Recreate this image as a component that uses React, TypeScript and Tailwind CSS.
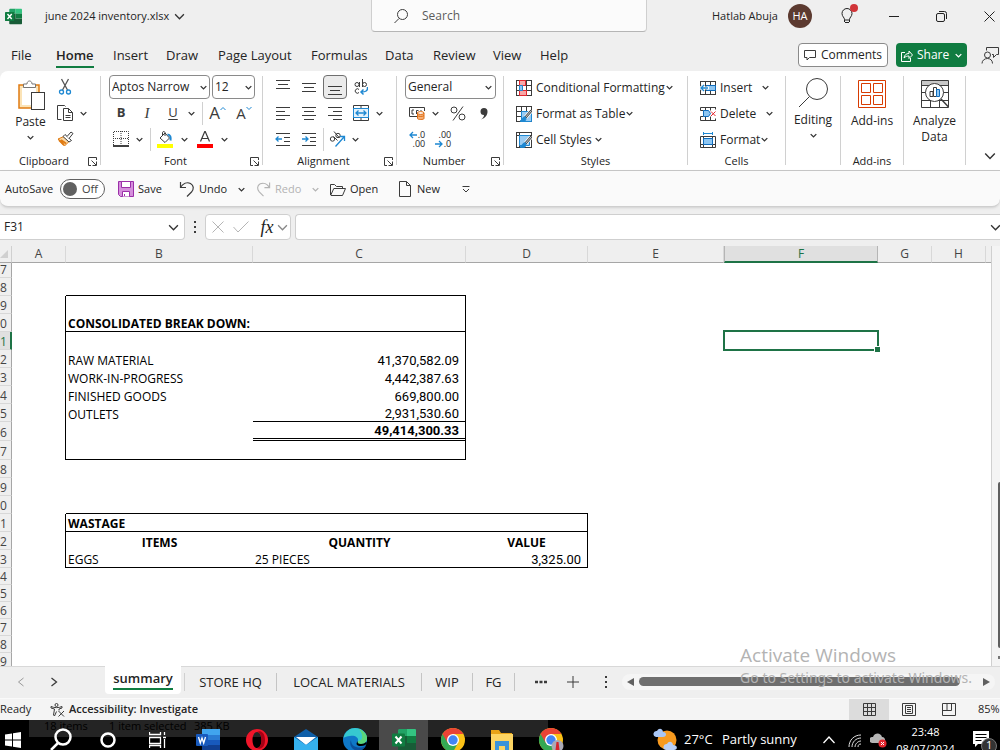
import type { ReactNode } from "react";

const ink = "#3b3b3b";
const blue = "#1e88d2";

type Kids = { children?: ReactNode };

const Svg = ({ w = 16, h = 16, children }: Kids & { w?: number; h?: number }) => (
  <svg width={w} height={h} viewBox={`0 0 ${w} ${h}`} fill="none" stroke={ink} className="shrink-0" aria-hidden="true">
    {children}
  </svg>
);

const Chevron = ({ w = 7, color = "#333" }: { w?: number; color?: string }) => (
  <svg width={w} height={w} viewBox="0 0 10 10" fill="none" stroke={color} strokeWidth={w < 9 ? 1.9 : 1.2} className="shrink-0" aria-hidden="true">
    <path d="M1 3l4 4 4-4" />
  </svg>
);

const IconButton = ({ label, className = "w-[26px]", children }: Kids & { label: string; className?: string }) => (
  <button aria-label={label} className={`flex h-[24px] shrink-0 items-center justify-center ${className}`}>
    {children}
  </button>
);

const Drop = ({ label }: { label: string }) => (
  <IconButton label={label} className="w-[10px]">
    <Chevron />
  </IconButton>
);

const Row = ({ children, className = "" }: Kids & { className?: string }) => (
  <div className={`flex h-[26px] shrink-0 items-center ${className}`}>{children}</div>
);

const Launcher = ({ label }: { label: string }) => (
  <button aria-label={label} className="mr-[3px] flex h-[10px] w-[9px] items-center">
    <Svg w={9} h={9}>
      <path d="M8.5 3V.5H.5v8H3M3.500 3.500L8 8M8.500 4.500v4h-4" />
    </Svg>
  </button>
);

const Group = ({ title, width, launcher, children }: Kids & { title: string; width: string; launcher?: boolean }) => (
  <section className={`my-[5px] flex shrink-0 flex-col border-r border-[#d0d0d0] ${width}`}>
    <div className="-mt-[2px] h-[78px] shrink-0">{children}</div>
    <div className="flex h-[18px] shrink-0 items-center">
      <span className="flex-1 text-center text-[11px]">{title}</span>
      {launcher && <Launcher label={`${title} settings`} />}
    </div>
  </section>
);

const Lines = ({ rows }: { rows: [number, number, number][] }) => (
  <Svg w={16} h={16}>
    {rows.map(([x, y, len]) => (
      <path key={y} d={`M${x} ${y + 0.5}h${len}`} />
    ))}
  </Svg>
);

const Divider = ({ className = "h-[23px]" }: { className?: string }) => <span className={`w-px shrink-0 bg-[#d0d0d0] ${className}`} />;

const ExcelLogo = ({ size }: { size: number }) => (
  <svg width={size} height={size} viewBox="0 0 24 24" className="shrink-0" aria-hidden="true">
    <path fill="#21a366" d="M7 1h8v7H6V2z" />
    <path fill="#33c481" d="M15 1h8a1 1 0 0 1 1 1v6h-9z" />
    <path fill="#107c41" d="M15 8h9v7h-9z" />
    <path fill="#185c37" d="M6 8h9v7h9v7a1 1 0 0 1-1 1H7a1 1 0 0 1-1-1z" />
    <rect y="5.500" width="13" height="13" rx="1" fill="#107c41" />
    <path stroke="#fff" strokeWidth="2" d="M3.500 8.500l6 7M9.500 8.500l-6 7" />
  </svg>
);

const GridBase = () => (
  <>
    <rect x=".5" y=".5" width="15" height="15" fill="#fff" />
    <path d="M.5 5.500h15M.5 10.500h15M5.500.5v15M10.500.5v15" />
  </>
);

const Brush = () => (
  <>
    <path d="M15 5L9 12" stroke="#fff" strokeWidth="4" />
    <path d="M15.500 4.500L9 12" strokeWidth="2.500" />
    <path d="M15.500 4.500L9 12" stroke="#cfd8dc" />
    <path d="M9.500 11c-3-1-3 3-5.500 4 3 1.500 6 .5 6-2.500z" fill={blue} stroke={blue} />
  </>
);

function TitleBar() {
  return (
    <header className="grid h-[36px] shrink-0 grid-cols-[371fr_276fr_353fr] items-start">
      <div className="flex h-[32px] items-center pl-[5px]">
        <ExcelLogo size={17} />
        <button className="ml-[23px] flex items-center gap-[5px] text-[11px]">
          june 2024 inventory.xlsx
          <Chevron w={11} />
        </button>
      </div>
      <label className="flex h-[32px] items-center rounded-b border border-t-0 border-[#cfcfcf] border-b-[#b5b5b5] bg-[#fbfbfb] pl-[21px]">
        <Svg w={16} h={16}>
          <circle cx="9.500" cy="6.500" r="5" />
          <path d="M6 10.500L1.500 15" />
        </Svg>
        <input aria-label="Search" placeholder="Search" className="ml-[13px] w-full min-w-0 bg-transparent text-[12px] outline-none placeholder:text-[#5b5b5b]" />
      </label>
      <div className="flex h-[32px] items-center pl-[65px]">
        <span className="w-[76px] shrink-0 text-[11px] whitespace-nowrap">Hatlab Abuja</span>
        <button className="flex size-[24px] shrink-0 items-center justify-center rounded-full bg-[#5c3a30] text-[11px] text-white">HA</button>
        <IconButton label="Tips" className="ml-[26px] w-[20px]">
          <Svg w={20} h={24}>
            <path d="M6.500 18v-2.500c0-2-2.500-3-2.500-6a5 5 0 0 1 10 0c0 3-2.500 4-2.500 6V18M6.500 16h5M7 18.500h4" stroke="#222" />
            <circle cx="16" cy="4" r="4" fill="#d13438" stroke="none" />
          </Svg>
        </IconButton>
        <IconButton label="Minimize" className="ml-[27px] w-[18px]">
          <Svg w={10} h={10}><path d="M0 5.500h10" stroke="#222" /></Svg>
        </IconButton>
        <IconButton label="Restore" className="ml-[29px] w-[18px]">
          <Svg w={11} h={11}>
            <rect x=".5" y="2.500" width="8" height="8" rx="1.500" stroke="#222" />
            <path d="M3 .5h5.500a2 2 0 0 1 2 2V8" stroke="#222" />
          </Svg>
        </IconButton>
        <IconButton label="Close" className="ml-[30px] w-[18px]">
          <Svg w={11} h={11}><path d="M.5.5l10 10M10.500.5l-10 10" stroke="#222" /></Svg>
        </IconButton>
      </div>
    </header>
  );
}

const menu = [
  ["File", "w-[45px]"],
  ["Home", "w-[57px]"],
  ["Insert", "w-[53px]"],
  ["Draw", "w-[52px]"],
  ["Page Layout", "w-[93px]"],
  ["Formulas", "w-[74px]"],
  ["Data", "w-[48px]"],
  ["Review", "w-[60px]"],
  ["View", "w-[47px]"],
  ["Help", "w-[40px]"],
];

function MenuBar() {
  return (
    <nav className="flex h-[35px] shrink-0 items-center pt-[3px] pl-[11px] text-[13px]">
      {menu.map(([name, width]) => (
        <button key={name} className={`shrink-0 pt-[4px] text-left whitespace-nowrap ${width}`}>
          <span className={name === "Home" ? "inline-block border-b-2 border-[#107c41] font-semibold" : "inline-block border-b-2 border-transparent"}>{name}</span>
        </button>
      ))}
      <button className="ml-auto flex h-[24px] w-[90px] shrink-0 items-center gap-[5px] rounded border border-[#8a8a8a] bg-white px-[5px] text-[12px]">
        <Svg w={12} h={12}><path d="M.5 1.500h11v7h-6L3 11V8.500H.5z" /></Svg>
        Comments
      </button>
      <button className="ml-[8px] flex h-[24px] w-[71px] shrink-0 items-center gap-[4px] rounded bg-[#107c41] px-[5px] text-[12px] text-white">
        <Svg w={12} h={13}>
          <path stroke="#fff" d="M4 3.500H.5v9h9V9M3 9c.5-3 2-4.500 5-4.500V2l3.500 4L8 9.500V7C6 7 4.500 7.500 3 9z" />
        </Svg>
        Share
        <span className="ml-auto"><Chevron color="#fff" /></span>
      </button>
      <IconButton label="Catch up" className="ml-[13px] w-[20px]">
        <Svg w={18} h={17}>
          <circle cx="6.500" cy="8" r="3" />
          <path d="M1 16.500c0-3 2.500-5 5.500-5s5 2 5 5M5.500 3.500v-3h12v7h-2l-3 3v-3H11" />
        </Svg>
      </IconButton>
    </nav>
  );
}

function ClipboardGroup() {
  return (
    <Group title="Clipboard" width="w-[101px]" launcher>
      <div className="flex">
        <button className="ml-[10px] flex w-[41px] flex-col items-center pt-[6px] text-[12px]">
          <Svg w={28} h={31}>
            <rect x="2" y="5" width="20" height="23" fill="#fbe3b6" stroke="#e07b12" strokeWidth="1.500" />
            <path d="M5 8h14v17H5z" fill="#fff" stroke="none" />
            <path d="M6.500 7.500V4H10c0-4 5-4 5 0h3.500v3.500z" fill="#fff" stroke="#777" />
            <rect x="14.500" y="12.500" width="13" height="17" fill="#fff" />
          </Svg>
          <span className="mt-[2px] leading-[18px]">Paste</span>
          <span className="mt-[3px]"><Chevron /></span>
        </button>
        <div className="pl-[1px]">
          <Row>
            <IconButton label="Cut">
              <Svg w={16} h={18}>
                <path d="M4.500 1l6 11M11.500 1l-6 11" stroke="#555" strokeWidth="1.300" />
                <circle cx="4.500" cy="14" r="2" stroke={blue} strokeWidth="1.300" />
                <circle cx="11.500" cy="14" r="2" stroke={blue} strokeWidth="1.300" />
              </Svg>
            </IconButton>
          </Row>
          <Row>
            <IconButton label="Copy">
              <Svg w={17} h={17}>
                <path d="M4.500 14.500h-4V.5h7l1 1M6.500 3.500h5l4 4v8h-9zM11.500 3.500v4h4M8.500 10.500h5M8.500 12.500h5" />
              </Svg>
            </IconButton>
            <Drop label="Copy options" />
          </Row>
          <Row>
            <IconButton label="Format Painter">
              <Svg w={17} h={16}>
                <path d="M1 8l6-2.500 5 5L7.500 15z" fill="#fbd9a8" stroke="#e07b12" />
                <path d="M2 9l5 5M4 9l5 3.500" stroke="#e07b12" strokeWidth="1.800" />
                <path d="M6 5.500l2-2 6.500 6-2.500 1.500z" fill="#fff" />
                <path d="M10 5.500l4-4.500 2 1.500-4 5" fill="#fff" />
              </Svg>
            </IconButton>
          </Row>
        </div>
      </div>
    </Group>
  );
}

function FontGroup() {
  return (
    <Group title="Font" width="w-[162px]" launcher>
      <Row className="gap-[2px] pl-[8px]">
        <div className="flex h-[24px] w-[101px] items-center rounded border border-[#8a8a8a] bg-white pr-[2px]">
          <select aria-label="Font name" className="w-full min-w-0 appearance-none bg-transparent pl-[2px] text-[12px]">
            <option>Aptos Narrow</option>
          </select>
          <Chevron />
        </div>
        <div className="flex h-[24px] w-[43px] items-center rounded border border-[#8a8a8a] bg-white pr-[2px]">
          <select aria-label="Font size" className="w-full min-w-0 appearance-none bg-transparent pl-[2px] text-[12px]">
            <option>12</option>
          </select>
          <Chevron />
        </div>
      </Row>
      <Row className="pl-[7px] text-[13px] text-[#3b3b3b]">
        <IconButton label="Bold"><b>B</b></IconButton>
        <IconButton label="Italic"><i className="font-['Liberation_Serif',serif] text-[15px]">I</i></IconButton>
        <IconButton label="Underline"><span className="underline underline-offset-2">U</span></IconButton>
        <Drop label="Underline options" />
        <Divider className="ml-[6px] h-[23px]" />
        <IconButton label="Increase Font Size" className="ml-[1px] w-[27px]">
          <span className="text-[17px]">A</span>
          <span className="mb-[10px]"><svg width="6" height="5" viewBox="0 0 6 5" fill="none" stroke={blue}><path d="M.5 4L3 1.500 5.500 4" /></svg></span>
        </IconButton>
        <IconButton label="Decrease Font Size">
          <span className="text-[15px]">A</span>
          <span className="mb-[10px]"><svg width="6" height="5" viewBox="0 0 6 5" fill="none" stroke={blue}><path d="M.5 1L3 3.500 5.500 1" /></svg></span>
        </IconButton>
      </Row>
      <Row className="pl-[7px]">
        <IconButton label="Borders">
          <Svg w={16} h={16}>
            <path d="M.5 14V.5h15V14M8 0v14M0 7.500h16" strokeDasharray="1 1" />
            <path d="M0 15h16" stroke="#000" strokeWidth="1.500" />
          </Svg>
        </IconButton>
        <Drop label="Borders options" />
        <Divider className="ml-[6px] h-[23px]" />
        <IconButton label="Fill Color" className="w-[28px]">
          <Svg w={16} h={17}>
            <path d="M3 7l5-5 4.500 5L8 11.500zM8 5V1.500a1.300 1.300 0 0 0-2.500 0V5" />
            <path d="M10.500 3.500c3 0 3.500 3 3 6" stroke={blue} strokeWidth="2" />
            <path d="M0 13h16v4H0z" fill="#ff0" stroke="none" />
          </Svg>
        </IconButton>
        <Drop label="Fill Color options" />
        <IconButton label="Font Color" className="ml-[2px] w-[28px]">
          <Svg w={16} h={17}>
            <path d="M3.500 10.500L8 0l4.500 10.500M5 7.500h6" strokeWidth="1.200" />
            <path d="M0 13h16v4H0z" fill="#f00" stroke="none" />
          </Svg>
        </IconButton>
        <Drop label="Font Color options" />
      </Row>
    </Group>
  );
}

function AlignmentGroup() {
  return (
    <Group title="Alignment" width="w-[134px]" launcher>
      <Row className="pl-[7px]">
        <IconButton label="Top Align"><Lines rows={[[1, 1, 14], [3, 5, 10], [1, 9, 14]]} /></IconButton>
        <IconButton label="Middle Align"><Lines rows={[[1, 4, 14], [3, 8, 10], [1, 12, 14]]} /></IconButton>
        <IconButton label="Bottom Align" className="mx-[1px] w-[24px] rounded border border-[#6f6f6f] bg-[#ebebeb]">
          <Lines rows={[[1, 7, 14], [3, 11, 10], [1, 15, 14]]} />
        </IconButton>
        <IconButton label="Wrap Text">
          <Svg w={14} h={17}>
            <circle cx="3" cy="5.500" r="2" />
            <path d="M5.500 3v5M8.500 0v8M5 13.500a2.200 2.200 0 1 1 0-3" />
            <circle cx="10.500" cy="5.500" r="2" />
            <path d="M13.500 8c.5 4-2 5-6 5M9.500 10.500L7 13l2.500 2.500" stroke={blue} strokeWidth="1.500" />
          </Svg>
        </IconButton>
      </Row>
      <Row className="pl-[7px]">
        <IconButton label="Align Left"><Lines rows={[[1, 2, 14], [1, 6, 9], [1, 10, 14], [1, 14, 9]]} /></IconButton>
        <IconButton label="Center"><Lines rows={[[1, 2, 14], [3, 6, 10], [1, 10, 14], [3, 14, 10]]} /></IconButton>
        <IconButton label="Align Right"><Lines rows={[[1, 2, 14], [6, 6, 9], [1, 10, 14], [6, 14, 9]]} /></IconButton>
        <IconButton label="Merge and Center">
          <Svg>
            <path d="M.5.5h15v15H.5zM8 0v4M8 12v4" />
            <rect x=".5" y="3.500" width="15" height="9" fill="#e3f1fb" stroke={blue} />
            <path d="M3 8h10M5.500 5.500L3 8l2.500 2.500M10.500 5.500L13 8l-2.500 2.500" stroke={blue} strokeWidth="1.300" />
          </Svg>
        </IconButton>
        <Drop label="Merge options" />
      </Row>
      <Row className="pl-[7px]">
        <IconButton label="Decrease Indent">
          <Svg><path d="M1 2.500h14M9 6.500h6M9 10.500h6M1 14.500h14" /><path d="M7 8H1M3.500 5.500L1 8l2.500 2.500" stroke={blue} strokeWidth="1.300" /></Svg>
        </IconButton>
        <IconButton label="Increase Indent">
          <Svg><path d="M1 2.500h14M9 6.500h6M9 10.500h6M1 14.500h14" /><path d="M1 8h6M4.500 5.500L7 8l-2.500 2.500" stroke={blue} strokeWidth="1.300" /></Svg>
        </IconButton>
        <Divider className="ml-[1px] h-[23px]" />
        <IconButton label="Orientation" className="w-[26px]">
          <Svg w={17} h={17}>
            <circle cx="3.500" cy="8" r="2.200" />
            <circle cx="9" cy="4.500" r="2.200" />
            <path d="M4.500 5.500l4 4M5 .5L10.500 7" />
            <path d="M6.500 15.500L15 6M11 5.500h4.500V10" stroke={blue} strokeWidth="1.300" />
          </Svg>
        </IconButton>
        <Drop label="Orientation options" />
      </Row>
    </Group>
  );
}

const Arrow = ({ d }: { d: string }) => (
  <svg width="9" height="8" viewBox="0 0 9 8" fill="none" stroke={blue} strokeWidth="1.300" aria-hidden="true">
    <path d={d} />
  </svg>
);

const Decimals = ({ grow }: { grow: boolean }) => (
  <span className="flex flex-col text-[9px] leading-[10px]">
    <span className="flex h-[9px] items-center justify-end">
      {grow && <Arrow d="M8 4H1M4 1L1 4l3 3" />}
      {grow ? ".0" : ".00"}
    </span>
    <span className="flex h-[9px] items-center justify-end">
      {!grow && <Arrow d="M0 4h7M4 1l3 3-3 3" />}
      {grow ? ".00" : ".0"}
    </span>
  </span>
);

function NumberGroup() {
  return (
    <Group title="Number" width="w-[107px]" launcher>
      <Row className="pl-[8px]">
        <div className="flex h-[24px] w-[91px] items-center rounded border border-[#8a8a8a] bg-white pr-[3px]">
          <select aria-label="Number format" className="w-full min-w-0 appearance-none bg-transparent pl-[2px] text-[12px]">
            <option>General</option>
          </select>
          <Chevron />
        </div>
      </Row>
      <Row className="pl-[7px]">
        <IconButton label="Accounting Number Format">
          <Svg w={16} h={14}>
            <path d="M8 10.500H.5v-9h15V5M5 4H3v4h2M7.500 8V4.500h2M12 4v1" />
            <path d="M8.500 7v5.500c0 1.300 6.500 1.300 6.500 0V7z" fill="#f5b27a" stroke="#e06c12" />
            <ellipse cx="11.700" cy="7" rx="3.300" ry="1.400" fill="#fff" stroke="#e06c12" />
            <path d="M8.500 9.500c1 1.300 5.500 1.300 6.500 0" stroke="#e06c12" />
          </Svg>
        </IconButton>
        <Drop label="Accounting options" />
        <IconButton label="Percent Style" className="ml-[5px] w-[26px]">
          <Svg w={16} h={15}><circle cx="4" cy="4" r="3" /><circle cx="12" cy="11" r="3" /><path d="M13 .5L3 14.500" /></Svg>
        </IconButton>
        <IconButton label="Comma Style">
          <Svg w={8} h={13}><path d="M1 12.500c5-1.500 6.500-5 6.500-8A3.500 3.500 0 1 0 4 8c0 1.500-1 3-3 4.500z" fill={ink} stroke="none" /></Svg>
        </IconButton>
      </Row>
      <Row className="pl-[7px]">
        <IconButton label="Increase Decimal"><Decimals grow /></IconButton>
        <IconButton label="Decrease Decimal"><Decimals grow={false} /></IconButton>
      </Row>
    </Group>
  );
}

const TextTool = ({ icon, label, gap = "gap-[3px]" }: { icon: ReactNode; label: string; gap?: string }) => (
  <Row className="pt-[1px] pl-[12px]">
    <button className="flex items-center text-[12px] whitespace-nowrap">
      <span className="mr-[4px]">{icon}</span>
      <span className={`flex items-center ${gap}`}>
        {label}
        <Chevron />
      </span>
    </button>
  </Row>
);

function StylesGroup() {
  return (
    <Group title="Styles" width="w-[184px]">
      <TextTool
        gap="gap-[1px]"
        label="Conditional Formatting"
        icon={
          <Svg>
            <GridBase />
            <path d="M3.500.5h6v5h-6zM5.500 10.500h5v5h-7v-5z" fill="#f7a8a8" stroke="#e3262e" />
            <path d="M3.500 5.500h3v5h-3z" fill="#8ec6f2" stroke={blue} />
          </Svg>
        }
      />
      <TextTool gap="gap-[1px]" label="Format as Table" icon={<Svg><GridBase /><path d="M5.500 5.500h10v10h-10z" fill="#9accf3" stroke={blue} /><Brush /></Svg>} />
      <TextTool
        label="Cell Styles"
        icon={
          <Svg>
            <rect x=".5" y=".5" width="15" height="15" fill="#fff" />
            <path d="M.5 3.500h15M3.500.5v15" />
            <path d="M3.500 3.500h10v10h-10z" fill="#9accf3" stroke={blue} />
            <Brush />
          </Svg>
        }
      />
    </Group>
  );
}

function CellsGroup() {
  return (
    <Group title="Cells" width="w-[98px]">
      <TextTool
        gap="gap-[10px]"
        label="Insert"
        icon={
          <Svg>
            <rect x=".5" y="1.500" width="15" height="13" fill="#fff" />
            <path d="M.5 5.500h15M.5 10.500h15M5.500 1.500v13M10.500 1.500v13" />
            <path d="M6.500 5.500h9v5h-9z" fill="#8ec6f2" stroke="#0f6cbd" />
            <path d="M9 8H1M4 4.500L.8 8 4 11.500" stroke="#fff" strokeWidth="3" />
            <path d="M8 8H1M4 5L1 8l3 3" stroke={blue} strokeWidth="1.300" />
          </Svg>
        }
      />
      <TextTool
        gap="gap-[10px]"
        label="Delete"
        icon={
          <Svg>
            <path d="M16 1.500H.5v3h3M5.500 1.500v3M10.500 1.500v3M15.500 1.500v2M16 14.500H.5v-4h3M5.500 14.500v-4M10.500 14.500v-4M15.500 14.500v-2" />
            <path d="M3.500 4.500h5l2 3-2 3h-5z" fill="#8ec6f2" stroke="#0f6cbd" />
            <path d="M11 5.500l4.500 4.500M15.500 5.500L11 10" stroke="#e3262e" />
          </Svg>
        }
      />
      <TextTool
        gap="gap-[1px]"
        label="Format"
        icon={
          <Svg>
            <path d="M.5 4.500h15v11H.5zM.5 12.500h15M3.500 4v12M12.500 4v12" />
            <path d="M3.500 6.500h9v6h-9z" fill="#8ec6f2" stroke="#0f6cbd" />
            <path d="M3.500 0v3M12.500 0v3M3.500 1.500h9" stroke={blue} />
          </Svg>
        }
      />
    </Group>
  );
}

function Ribbon() {
  return (
    <div className="flex h-[100px] shrink-0 rounded-tl-lg border-b border-[#c8c8c8] bg-white">
      <ClipboardGroup />
      <FontGroup />
      <AlignmentGroup />
      <NumberGroup />
      <StylesGroup />
      <CellsGroup />
      <Group title="" width="w-[55px]">
        <button className="flex w-full flex-col items-center pt-[4px] text-[12px]">
          <Svg w={30} h={30}>
            <circle cx="19" cy="11" r="10.500" />
            <path d="M11.500 18.500L1 29" />
          </Svg>
          <span className="mt-[3px] leading-[18px]">Editing</span>
          <span className="mt-[3px]"><Chevron /></span>
        </button>
      </Group>
      <Group title="Add-ins" width="w-[63px]">
        <button className="flex w-full flex-col items-center pt-[6px] text-[12px]">
          <svg width="28" height="28" viewBox="0 0 28 28" fill="none" stroke="#d83b01" aria-hidden="true">
            <path d="M.5.5h27v27H.5zM3.500 3.500h9v9h-9zM15.500 3.500h9v9h-9zM3.500 15.500h9v9h-9zM15.500 15.500h9v9h-9z" />
          </svg>
          <span className="mt-[4px] leading-[18px]">Add-ins</span>
        </button>
      </Group>
      <Group title="" width="w-[62px]">
        <button className="flex w-full flex-col items-center pt-[6px] text-[12px]">
          <Svg w={28} h={28}>
            <path d="M.5.5h27v27H.5z" />
            <path d="M1 1h26v4H1z" fill="#c8c8c8" stroke="none" />
            <path d="M.5 5.500h27M.5 12.500h27M.5 20.500h27M9.500 20v8M18.500 20v8" />
            <circle cx="13.500" cy="12.500" r="9" fill="#fff" />
            <path d="M20 19l7.500 8" strokeWidth="1.500" />
            <path d="M9 11.500h3v5H9z" />
            <path d="M12.500 7.500h3v9h-3z" fill="#fff" />
            <path d="M15.500 9.500h3v7h-3z" fill="#8ec6f2" stroke="#0f6cbd" />
          </Svg>
          <span className="mt-[5px] leading-[16px]">Analyze Data</span>
        </button>
      </Group>
      <div className="flex flex-1 items-end justify-end pr-[4px] pb-[2px]">
        <IconButton label="Collapse Ribbon" className="w-[12px]">
          <Chevron w={12} />
        </IconButton>
      </div>
    </div>
  );
}

function QuickAccess() {
  return (
    <div className="flex h-[36px] shrink-0 items-center rounded-b-lg border-b border-[#cfcfcf] bg-[#fafafa] pt-[1px] pl-[5px] text-[11px] shadow-sm">
      <label htmlFor="autosave" className="w-[55px] shrink-0 whitespace-nowrap">AutoSave</label>
      <button id="autosave" role="switch" aria-checked="false" className="flex h-[20px] w-[45px] shrink-0 items-center gap-[5px] rounded-full border border-[#616161] bg-white pl-[2px] text-[#444]">
        <span className="size-[14px] rounded-full bg-[#616161]" />
        Off
      </button>
      <button className="ml-[13px] flex w-[61px] shrink-0 items-center gap-[4px]">
        <Svg>
          <path d="M.5.5h15v15H2.500l-2-2z" fill="#d58fdc" stroke="#9b2fa8" />
          <path d="M3.500.5h9v6h-9zM4.500 15.500v-5h7v5" fill="#fff" stroke="#9b2fa8" />
          <path d="M6.500 13v2" stroke="#9b2fa8" />
        </Svg>
        Save
      </button>
      <button className="flex w-[57px] shrink-0 items-center gap-[4px]">
        <Svg><path d="M1.500 1v5.500H7M1.500 6.500C4 2.500 8 .8 11.500 2.500c3.500 2 3.500 5.500 1 8.500L8 15.500" strokeWidth="1.200" /></Svg>
        Undo
      </button>
      <Drop label="Undo history" />
      <button disabled className="ml-[10px] flex w-[54px] shrink-0 items-center gap-[4px] text-[#b3b3b3]">
        <svg width="15" height="16" viewBox="0 0 16 16" fill="none" stroke="#b3b3b3" strokeWidth="1.200" aria-hidden="true">
          <path d="M14.500 1v5.500H9M14.500 6.500C12 2.500 8 .8 4.500 2.500 1 4.500 1 8 3.500 11L8 15.500" />
        </svg>
        Redo
      </button>
      <IconButton label="Redo history" className="w-[10px]"><Chevron color="#b3b3b3" /></IconButton>
      <button className="ml-[10px] flex w-[69px] shrink-0 items-center gap-[4px]">
        <Svg w={16} h={13}><path d="M.5 12V1.500h4l2 2h6v2M.8 12l3-6.500h11.700l-3 7H.8" /></Svg>
        Open
      </button>
      <button className="flex w-[60px] shrink-0 items-center gap-[6px]">
        <Svg w={12} h={16}><path d="M.5.5h7l4 4v11H.5zM7.500.5v4h4" /></Svg>
        New
      </button>
      <IconButton label="Customize Quick Access Toolbar" className="w-[14px]">
        <Svg w={8} h={8}><path d="M.5 1.500h7M1 4l3 3 3-3" /></Svg>
      </IconButton>
    </div>
  );
}

function FormulaBar() {
  return (
    <div className="mt-[7px] flex h-[26px] shrink-0">
      <div className="flex w-[185px] shrink-0 items-center rounded-r border border-l-0 border-[#cfcfcf] bg-white pr-[5px]">
        <input aria-label="Name Box" defaultValue="F31" className="w-full min-w-0 pl-[4px] text-[12px] outline-none" />
        <Chevron w={11} />
      </div>
      <div className="flex w-[20px] shrink-0 items-center justify-center">
        <Svg w={2} h={12}><path d="M1 0v2M1 5v2M1 10v2" strokeWidth="2" /></Svg>
      </div>
      <div className="flex w-[86px] shrink-0 items-center rounded border border-[#cfcfcf] bg-white pl-[5px]">
        <IconButton label="Cancel" className="w-[13px]">
          <Svg w={12} h={12}><path d="M.5.5l11 11M11.500.5l-11 11" stroke="#b5b5b5" /></Svg>
        </IconButton>
        <IconButton label="Enter" className="ml-[9px] w-[16px]">
          <Svg w={16} h={12}><path d="M.5 6l4.500 5L15.500.5" stroke="#b5b5b5" /></Svg>
        </IconButton>
        <IconButton label="Insert Function" className="mr-[1px] ml-[9px] w-[18px]">
          <i className="font-['Liberation_Serif',serif] text-[18px] leading-none text-[#222]">fx</i>
        </IconButton>
        <Chevron w={11} color="#888" />
      </div>
      <div className="ml-[4px] flex min-w-0 flex-1 items-center rounded-l border border-r-0 border-[#cfcfcf] bg-white">
        <input aria-label="Formula Bar" className="w-full min-w-0 px-[4px] text-[12px] outline-none" />
        <IconButton label="Expand Formula Bar" className="w-[10px]"><Chevron w={11} /></IconButton>
      </div>
    </div>
  );
}

const columns = ["A", "B", "C", "D", "E", "F", "G", "H"];

// text, then borders and alignment for each filled cell
const cells: Record<string, [string, string]> = {
  B28: ["", "border-b border-b-black"],
  C28: ["", "border-b border-b-black"],
  B30: ["CONSOLIDATED BREAK DOWN:", "border-b border-b-black font-bold"],
  C30: ["", "border-b border-b-black"],
  B32: ["RAW MATERIAL", ""],
  C32: ["41,370,582.09", "text-right"],
  B33: ["WORK-IN-PROGRESS", ""],
  C33: ["4,442,387.63", "text-right"],
  B34: ["FINISHED GOODS", ""],
  C34: ["669,800.00", "text-right"],
  B35: ["OUTLETS", ""],
  C35: ["2,931,530.60", "border-b border-b-black text-right"],
  C36: ["49,414,300.33", "border-b-3 border-double border-b-black text-right font-bold"],
  B37: ["", "border-b border-b-black"],
  C37: ["", "border-b border-b-black"],
  B40: ["", "border-b border-b-black"],
  C40: ["", "border-b border-b-black"],
  D40: ["", "border-b border-b-black"],
  B41: ["WASTAGE", "border-b border-b-black font-bold"],
  C41: ["", "border-b border-b-black"],
  D41: ["", "border-b border-b-black"],
  B42: ["ITEMS", "text-center font-bold"],
  C42: ["QUANTITY", "text-center font-bold"],
  D42: ["VALUE", "text-center font-bold"],
  B43: ["EGGS", "border-b border-b-black"],
  C43: ["25 PIECES", "border-b border-b-black"],
  D43: ["3,325.00", "border-b border-b-black text-right"],
};

const rowNumbers = Array.from({ length: 23 }, (_, i) => i + 27);

function rowHeight(n: number) {
  if (n === 27) return "h-[15px]";
  if (n === 36 || n === 37) return "h-[19px]";
  return n > 43 ? "h-[17px]" : "h-[18px]";
}

function sideBorder(col: string, n: number) {
  const inTotals = n >= 29 && n <= 37;
  const inWastage = n >= 41 && n <= 43;
  if (col === "A" && (inTotals || inWastage)) return "border-r border-r-black";
  if (col === "C" && inTotals) return "border-r border-r-black";
  if (col === "D" && inWastage) return "border-r border-r-black";
  return "";
}

// figures get wider digits than the labels
function cellFace(style: string) {
  if (style.includes("text-right")) return "pr-[6px] font-['Roboto',sans-serif] text-[13px] leading-[15px]";
  const face = "font-['Open_Sans',sans-serif] text-[12px] leading-[14px]";
  return style.includes("text-center") ? face : `pl-[2px] ${face}`;
}

function Sheet() {
  return (
    <main className="mt-[6px] flex min-h-0 flex-1 overflow-hidden">
      <div className="min-w-0 flex-1 overflow-hidden border-r border-[#d0d0d0] bg-white">
        <table className="w-full table-fixed border-separate border-spacing-0 text-black">
          <colgroup>
            <col className="w-[12px]" />
            <col className="w-[54px]" />
            <col className="w-[187px]" />
            <col className="w-[213px]" />
            <col className="w-[122px]" />
            <col className="w-[136px]" />
            <col className="w-[154px]" />
            <col className="w-[54px]" />
            <col className="w-[54px]" />
            <col />
          </colgroup>
          <thead>
            <tr className="h-[17px] bg-[#efefef] font-['Open_Sans',sans-serif] text-[12px] leading-[14px] text-[#444]">
              <th aria-label="Select all" className="border-r border-b border-[#d0d0d0] border-b-[#a6a6a6] p-0">
                <svg width="8" height="8" viewBox="0 0 8 8" fill="#d0d0d0" aria-hidden="true"><path d="M8 0v8H0z" /></svg>
              </th>
              {columns.map((c) => (
                <th
                  key={c}
                  scope="col"
                  className={
                    c === "F"
                      ? "border-r border-b-2 border-l border-x-[#b5b5b5] border-b-[#1e7346] bg-[#e0e0e0] p-0 font-normal text-[#1e7346]"
                      : "border-r border-b border-r-[#d8d8d8] border-b-[#a6a6a6] p-0 font-normal"
                  }
                >
                  {c}
                </th>
              ))}
              <th className="border-b border-[#a6a6a6] p-0" />
            </tr>
          </thead>
          <tbody>
            {rowNumbers.map((n) => (
              <tr key={n} className={rowHeight(n)}>
                <th
                  scope="row"
                  className={`overflow-hidden border-b border-[#d8d8d8] p-0 text-left align-bottom font-['Open_Sans',sans-serif] text-[12px] leading-[14px] font-normal ${n === 31 ? "border-r-2 border-r-[#1e7346] bg-[#e0e0e0] text-[#1e7346]" : "border-r border-r-[#a6a6a6] bg-[#efefef] text-[#444]"}`}
                >
                  {n % 10}
                </th>
                {columns.map((c) => {
                  const [text, style] = cells[c + n] ?? ["", ""];
                  const active = c === "F" && n === 31;
                  return (
                    <td key={c} className={`py-0 align-bottom whitespace-nowrap ${cellFace(style)} ${style} ${sideBorder(c, n)} ${active ? "relative" : ""}`}>
                      {text}
                      {active && (
                        <span className="absolute -inset-x-[1px] -top-[2px] -bottom-[1px] border-2 border-[#1e7346]">
                          <span className="absolute -right-[3px] -bottom-[3px] size-[6px] border-t border-l border-white bg-[#1e7346]" />
                        </span>
                      )}
                    </td>
                  );
                })}
                <td />
              </tr>
            ))}
          </tbody>
        </table>
      </div>
      <div className="flex w-[8px] shrink-0 flex-col items-end bg-[#f4f4f4]">
        <span className="mt-[236px] h-[166px] w-[2px] rounded-l bg-[#5f5f5f]" />
        <span className="mt-[8px] h-[3px] w-[2px] bg-[#777]" />
      </div>
    </main>
  );
}

const sheets = [
  ["STORE HQ", "w-[92px]"],
  ["LOCAL MATERIALS", "w-[145px]"],
  ["WIP", "w-[51px]"],
  ["FG", "w-[42px]"],
];

function SheetTabs() {
  return (
    <div className="relative flex h-[32px] shrink-0 items-center border-t border-[#d8d8d8] bg-[#efefef] pb-[2px]">
      <IconButton label="Previous sheet" className="ml-[13px] w-[16px]">
        <Svg w={8} h={10}><path d="M6.500 1l-5 4 5 4" stroke="#999" /></Svg>
      </IconButton>
      <IconButton label="Next sheet" className="ml-[17px] w-[16px]">
        <Svg w={8} h={10}><path d="M1.500 1l5 4-5 4" strokeWidth="1.300" /></Svg>
      </IconButton>
      <button className="-mt-[1px] ml-[43px] h-[28px] w-[76px] shrink-0 self-start rounded-b bg-white pb-[2px] text-[13px] font-semibold">
        <span className="inline-block border-b-2 border-[#107c41] leading-[20px]">summary</span>
      </button>
      <Divider className="ml-[3px] h-[18px]" />
      {sheets.map(([name, width]) => (
        <button key={name} className={`h-[18px] shrink-0 border-r border-[#c4c4c4] text-center text-[13px] leading-[18px] whitespace-nowrap ${width}`}>
          {name}
        </button>
      ))}
      <IconButton label="More sheets" className="ml-[18px] w-[16px]">
        <Svg w={12} h={4}><path d="M0 2h3M4.500 2h3M9 2h3" strokeWidth="2.500" /></Svg>
      </IconButton>
      <IconButton label="New sheet" className="ml-[16px] w-[16px]">
        <Svg w={12} h={12}><path d="M6 0v12M0 6h12" /></Svg>
      </IconButton>
      <span className="ml-[17px] flex w-[16px] justify-center">
        <Svg w={2} h={12}><path d="M1 0v2M1 5v2M1 10v2" strokeWidth="2" /></Svg>
      </span>
      <div className="mr-[5px] ml-[8px] flex h-[16px] min-w-0 flex-1 items-center rounded-full bg-[#f5f5f5] px-[5px]">
        <Svg w={7} h={8}><path d="M7 0v8L0 4z" fill="#616161" stroke="none" /></Svg>
        <span className="mr-[23px] ml-[5px] h-[9px] min-w-0 flex-1 rounded-full bg-[#6e6e6e]" />
        <Svg w={7} h={8}><path d="M0 0v8l7-4z" fill="#616161" stroke="none" /></Svg>
      </div>
      <div className="pointer-events-none absolute right-[28px] bottom-[10px] text-[#b3b3b3]">
        <p className="text-[19px] leading-[26px]">Activate Windows</p>
        <p className="font-['Noto_Sans',sans-serif] text-[14px] leading-[20px] whitespace-nowrap">Go to Settings to activate Windows.</p>
      </div>
    </div>
  );
}

function StatusBar() {
  return (
    <div className="flex h-[22px] shrink-0 items-center border-t border-[#fafafa] bg-[#f4f4f4] text-[11px]">
      <span className="w-[50px]">Ready</span>
      <button className="flex items-center gap-[4px] font-semibold">
        <Svg w={15} h={14}>
          <circle cx="6.500" cy="2" r="1.500" />
          <path d="M1 3.500c3 1.500 8 1.500 11 0M1 3.500v1.500l3.500 1L3.500 12l1 1 2-4.500M12 3.500V5L9 6v1.500M8.500 8l5.500 5.500M14 8l-5.500 5.500" />
        </Svg>
        Accessibility: Investigate
      </button>
      <div className="ml-auto flex h-full">
        <IconButton label="Normal" className="h-full w-[40px] bg-[#dcdcdc]">
          <Svg w={13} h={13}><path d="M.5.5h12v12H.5zM.5 4.500h12M.5 8.500h12M4.500.5v12M8.500.5v12" /></Svg>
        </IconButton>
        <IconButton label="Page Layout view" className="h-full w-[40px]">
          <Svg w={14} h={13}><path d="M.5.5h13v12H.5zM3.500 2.500h7v8h-7zM5 4.500h4M5 6.500h4M5 8.500h4" /></Svg>
        </IconButton>
        <IconButton label="Page Break Preview" className="h-full w-[40px]">
          <Svg w={14} h={13}><path d="M.5.5h13v12H.5zM5 .5v7h4.500v-7M.5 7.500H5" /></Svg>
        </IconButton>
      </div>
      <span className="w-[31px] pl-[9px]">85%</span>
    </div>
  );
}

const Chrome = ({ badge }: { badge?: boolean }) => (
  <svg width="26" height="26" viewBox="0 0 26 26" aria-hidden="true">
    <circle cx="13" cy="13" r="12" fill="#fbc116" />
    <path fill="#34a853" d="M13 13L2.600 7A12 12 0 0 0 13 25l5-9z" />
    <path fill="#ea4335" d="M13 7h10.400A12 12 0 0 0 2.600 7l5.200 9z" />
    <circle cx="13" cy="13" r="6" fill="#fff" />
    <circle cx="13" cy="13" r="4.700" fill="#4285f4" />
    {badge && (
      <>
        <circle cx="19.500" cy="19" r="6" fill="#aaa9b5" />
        <path d="M18.500 15h2l1 8h-4z" fill="#d8232a" />
      </>
    )}
  </svg>
);

const apps: [string, ReactNode][] = [
  ["Search", <svg width="22" height="24" viewBox="0 0 22 24" fill="none" stroke="#fff" strokeWidth="2.500"><circle cx="13" cy="9" r="7.500" /><path d="M8 15l-7 7" /></svg>],
  ["Cortana", <svg width="20" height="18" viewBox="0 0 20 18" fill="none" stroke="#fff" strokeWidth="2.500"><circle cx="8" cy="9" r="6.500" /></svg>],
  ["Task View", <svg width="20" height="16" viewBox="0 0 20 16" fill="none" stroke="#fff"><path d="M.5 0v2.500h11V0M.5 5.500h11v6H.5zM.5 16v-2.500h11V16M15.500 0v3M15.500 7v9M14 5.500h3" strokeWidth="1.300" /></svg>],
  ["Word", <svg width="24" height="22" viewBox="0 0 24 22"><path fill="#41a5ee" d="M6 0h18v6H6z" /><path fill="#2b7cd3" d="M6 6h18v5H6z" /><path fill="#185abd" d="M6 11h18v5H6z" /><path fill="#103f91" d="M6 16h18v6H6z" /><rect y="5" width="12" height="12" rx="1" fill="#185abd" /><path d="M2.500 8l1.800 6L6 9l1.700 5 1.800-6" fill="none" stroke="#fff" strokeWidth="1.300" /></svg>],
  ["Opera", <svg width="24" height="24" viewBox="0 0 24 24"><path fill="#f0162a" fillRule="evenodd" d="M12 1a11 11 0 1 0 0 22 11 11 0 0 0 0-22zm0 3c3 0 4.500 4 4.500 8S15 20 12 20s-4.500-4-4.500-8S9 4 12 4z" /><path fill="#a70014" d="M12 4c3-2 8 0 8 8s-5 10-8 8c3 0 4.500-4 4.500-8S15 4 12 4z" /></svg>],
  ["Mail", <svg width="24" height="22" viewBox="0 0 24 22"><path fill="#0f5fa8" d="M0 8l12-8 12 8v14H0z" /><path fill="#fff" d="M2 8h20l-10 8z" /><path fill="#35b1ee" d="M0 8l12 8 12-8v14H0z" /></svg>],
  ["Edge", <svg width="26" height="26" viewBox="0 0 26 26"><circle cx="13" cy="13" r="12" fill="#0f78c8" /><path fill="#36c9d0" d="M1.500 11C3 4 8 1 13 1c7 0 12 5 12 10 0 4-3 6-6 6s-4-1-3-3c1-4-4-6-8-5-3 0-5 1-6.500 2z" /><path fill="#5bd67a" d="M17 2c5 2 8 6 8 9 0 4-3 6-6 6s-4-1-3-3c6 0 5-7 1-12z" /><path fill="#0b4f9c" d="M9 13c-2 4 0 9 6 11 4 0 7-2 9-5-6 3-15 2-15-6z" /><path fill="#000" d="M16 14c-1 2 0 3 3 3 2 0 4-1 5-2l1 1c-1 2-3 3-6 3-4 0-6-2-3-5z" /></svg>],
  ["Excel", <ExcelLogo size={24} />],
  ["Chrome", <Chrome />],
  ["File Explorer", <svg width="24" height="22" viewBox="0 0 24 22"><path fill="#e8a317" d="M1 1h8l2 3h11v4H1z" /><path fill="#fcd462" d="M1 5h22v16H1z" /><path fill="#3a93d8" d="M5 12h14v9h-4v-4H9v4H5z" /></svg>],
  ["Chrome profile", <Chrome badge />],
];

function Taskbar() {
  return (
    <footer className="relative h-[30px] shrink-0 overflow-hidden bg-black text-white">
      <div className="absolute top-0 left-[29px] flex h-[17px] w-[519px] bg-[#242424] pl-[15px] text-[11px] leading-[12px] text-black">
        <span className="w-[65px]">18 items</span>
        <span className="w-[85px] whitespace-nowrap">1 item selected</span>
        <span>385 KB</span>
      </div>
      <div className="relative flex h-[40px] items-center">
        <button aria-label="Start" className="w-[36px] shrink-0 pl-[5px]">
          <svg width="16" height="16" viewBox="0 0 16 16" fill="#fff"><path d="M0 2.500l7-1v6H0zM8 1.300L16 0v7.500H8zM0 8.500h7v6l-7-1zM8 8.500h8V16l-8-1.300z" /></svg>
        </button>
        {apps.map(([name, icon]) => (
          <button key={name} aria-label={name} className={`flex h-full w-[49px] shrink-0 items-center justify-center ${name === "Excel" ? "bg-[#4a4a4a]" : ""}`}>
            {icon}
          </button>
        ))}
        <div className="ml-auto flex shrink-0 items-center">
          <button className="flex w-[166px] items-center text-[13px]">
            <svg width="26" height="24" viewBox="0 0 26 24">
              <circle cx="14" cy="12" r="9.500" fill="#f79a1f" />
              <path d="M3 9a3 3 0 0 1 1-6c2-4 6-2 6 1 4 0 4 5 0 5z" fill="#a9c6f5" />
              <path d="M13 22a3 3 0 0 1 1-6c2-4 6-2 6 1 5 0 5 5 1 5z" fill="#b9d0f7" />
            </svg>
            <span className="ml-[5px] w-[38px] text-left whitespace-nowrap">27°C</span>
            <span className="whitespace-nowrap">Partly sunny</span>
          </button>
          <IconButton label="Show hidden icons" className="ml-[3px] w-[14px]">
            <svg width="12" height="8" viewBox="0 0 12 8" fill="none" stroke="#fff" strokeWidth="1.300"><path d="M.5 7L6 1l5.500 6" /></svg>
          </IconButton>
          <IconButton label="Network" className="ml-[11px] w-[14px]">
            <svg width="13" height="13" viewBox="0 0 13 13" fill="none" stroke="#ddd"><path d="M1 13C1 6 6 1 13 1M4 13c0-5 4-9 9-9M7 13c0-3 3-6 6-6M10 13c0-2 1-3 3-3" /></svg>
          </IconButton>
          <IconButton label="OneDrive" className="ml-[8px] w-[18px]">
            <svg width="17" height="15" viewBox="0 0 17 15"><path d="M2 10a3 3 0 0 1 1-6c2-5 8-4 9 0 4 0 4 6 1 6z" fill="#b5b5b5" /><circle cx="12.500" cy="10.500" r="4" fill="#e3262e" /><path d="M11 9l3 3M14 9l-3 3" stroke="#fff" /></svg>
          </IconButton>
          <div className="ml-[6px] w-[65px] text-center text-[11px] leading-[17px]">
            23:48
            <br />
            08/07/2024
          </div>
          <IconButton label="Notifications" className="ml-[12px] w-[30px]">
            <svg width="26" height="22" viewBox="0 0 26 22">
              <path d="M1 2h16v13H6l-3 3v-3H1z" fill="#fff" />
              <path d="M3.500 5.500h11M3.500 8.500h11M3.500 11.500h6" stroke="#000" />
              <circle cx="17" cy="17" r="7.500" fill="#333" stroke="#777" />
              <text x="14" y="20" fontSize="11" fill="#fff">1</text>
            </svg>
          </IconButton>
        </div>
      </div>
    </footer>
  );
}

export default function App() {
  return (
    <div className="flex h-screen flex-col overflow-hidden bg-[#efefef] font-['Open_Sans',sans-serif] text-[#242424]">
      <TitleBar />
      <MenuBar />
      <Ribbon />
      <QuickAccess />
      <FormulaBar />
      <Sheet />
      <SheetTabs />
      <StatusBar />
      <Taskbar />
    </div>
  );
}
